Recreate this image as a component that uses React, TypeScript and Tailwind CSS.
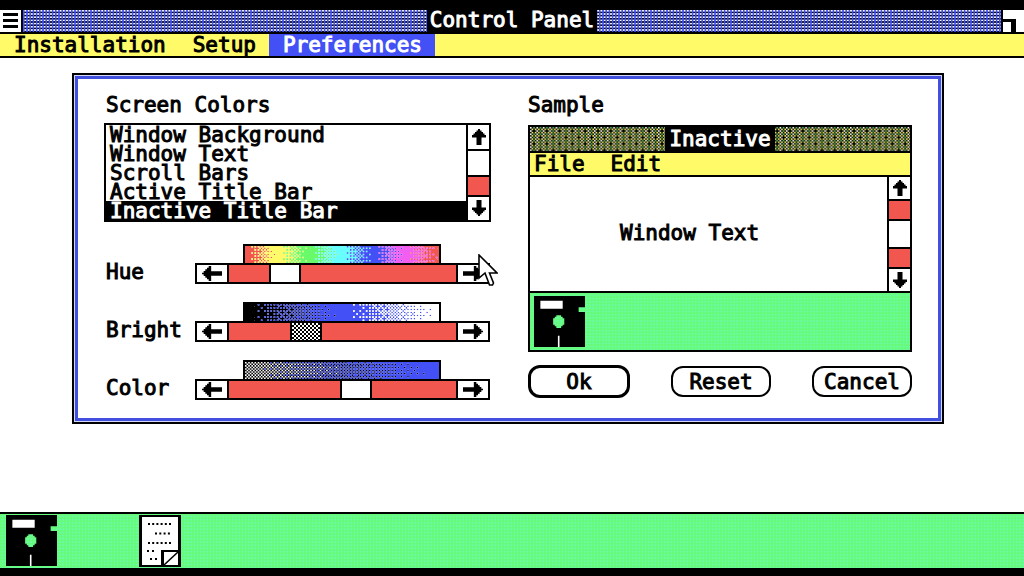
import { useId, useMemo, useState } from "react";
import clsx from "clsx";

type RGB = [number, number, number];
type Cell = { x: number; y: number; color: string };

const PIXEL = 1.6;

const BAYER = [
  [0, 32, 8, 40, 2, 34, 10, 42],
  [48, 16, 56, 24, 50, 18, 58, 26],
  [12, 44, 4, 36, 14, 46, 6, 38],
  [60, 28, 52, 20, 62, 30, 54, 22],
  [3, 35, 11, 43, 1, 33, 9, 41],
  [51, 19, 59, 27, 49, 17, 57, 25],
  [15, 47, 7, 39, 13, 45, 5, 37],
  [63, 31, 55, 23, 61, 29, 53, 21],
];

const BLACK: RGB = [0, 0, 0];
const WHITE: RGB = [255, 255, 255];
const RED: RGB = [241, 86, 79];
const YELLOW: RGB = [255, 251, 104];
const GREEN: RGB = [104, 250, 104];
const CYAN: RGB = [104, 253, 255];
const BLUE: RGB = [66, 80, 246];
const MAGENTA: RGB = [242, 94, 240];

const toCss = (c: RGB) => `rgb(${c[0]},${c[1]},${c[2]})`;

// "checker" stands for the black and white grey at the start of the Color ramp
const RAMPS: Record<string, (RGB | "checker")[]> = {
  Hue: [RED, YELLOW, GREEN, CYAN, BLUE, MAGENTA, RED],
  Bright: [BLACK, BLUE, WHITE],
  Color: ["checker", BLUE],
};

const SLIDERS = [
  { name: "Hue", value: 40 },
  { name: "Bright", value: 61, dithered: true },
  { name: "Color", value: 111 },
];

const SCREEN_PARTS = [
  "Window Background",
  "Window Text",
  "Scroll Bars",
  "Active Title Bar",
  "Inactive Title Bar",
];

const TITLE_CELLS: Cell[] = [
  { x: 0, y: 0, color: "#4250f6" },
  { x: 1, y: 0, color: "#ffffff" },
  { x: 0, y: 1, color: "#4250f6" },
];

const GREEN_CELLS: Cell[] = [{ x: 1, y: 1, color: "#68fbb0" }];

const INACTIVE_CELLS: Cell[] = [];
for (let y = 0; y < 8; y++) {
  for (let x = 0; x < 8; x++) {
    if ((x + y) % 2) continue;
    if ((x === 2 && y === 2) || (x === 6 && y === 6)) continue;
    const color = y % 2 ? "#fffb68" : x % 4 === 0 ? "#ffffff" : "#58c058";
    INACTIVE_CELLS.push({ x, y, color });
  }
}

function PatternFill({ size, base, cells }: { size: number; base: string; cells: Cell[] }) {
  const id = useId();
  return (
    <svg className="absolute inset-0 size-full" aria-hidden="true">
      <defs>
        <pattern
          id={id}
          width={size}
          height={size}
          patternUnits="userSpaceOnUse"
          patternTransform={`scale(${PIXEL})`}
        >
          <rect width={size} height={size} fill={base} />
          {cells.map((c) => (
            <rect key={`${c.x}-${c.y}`} x={c.x} y={c.y} width="1" height="1" fill={c.color} />
          ))}
        </pattern>
      </defs>
      <rect width="100%" height="100%" fill={`url(#${id})`} />
    </svg>
  );
}

function Ramp({ stops }: { stops: (RGB | "checker")[] }) {
  const cols = 122;
  const rows = 11;
  const paths = useMemo(() => {
    const out: Record<string, string> = {};
    for (let y = 0; y < rows; y++) {
      for (let x = 0; x < cols; x++) {
        const pos = (x / (cols - 1)) * (stops.length - 1);
        const i = Math.min(Math.floor(pos), stops.length - 2);
        const pick = pos - i > (BAYER[y % 8][x % 8] + 6) / 72 ? stops[i + 1] : stops[i];
        const color = pick === "checker" ? ((x + y) % 2 ? BLACK : WHITE) : pick;
        const key = toCss(color);
        out[key] = (out[key] || "") + `M${x} ${y}h1v1h-1z`;
      }
    }
    return out;
  }, [stops]);

  return (
    <svg
      className="block size-full"
      viewBox={`0 0 ${cols} ${rows}`}
      preserveAspectRatio="none"
      aria-hidden="true"
    >
      {Object.entries(paths).map(([color, d]) => (
        <path key={color} d={d} fill={color} />
      ))}
    </svg>
  );
}

function SideArrow({ flip }: { flip?: boolean }) {
  return (
    <svg viewBox="0 0 12 9" className={clsx("h-[15px] w-5", flip && "-scale-x-100")} aria-hidden="true">
      <path d="M0 4h1V3h1V2h1V1h1V0h1.500v3.200H12v2.600H5.500V9H4V8H3V7H2V6H1V5H0z" />
    </svg>
  );
}

function UpArrow({ flip }: { flip?: boolean }) {
  return (
    <svg viewBox="0 0 16 16" className={clsx("size-4", flip && "-scale-y-100")} aria-hidden="true">
      <path d="M7 0h2v1.500h1.500V3H12v1.500h1.500V6H15v2.500h-4.500V16h-5V8.500H1V6h1.500V4.500H4V3h1.500V1.500H7z" />
    </svg>
  );
}

function DiskIcon() {
  return (
    <svg viewBox="0 0 32 32" className="size-[51px]" aria-hidden="true">
      <path
        fillRule="evenodd"
        d="M0 0h32v7h-4v3h4v22H0zM14 12h3v1h1v1h1v4h-1v1h-1v1h-3v-1h-1v-1h-1v-4h1v-1h1z"
      />
      <path fill="#fff" d="M4 3h14v5H4zM15 25h1v7h-1z" />
    </svg>
  );
}

function NoteIcon() {
  return (
    <svg viewBox="0 0 42 52" className="h-[52px] w-[42px]" aria-hidden="true">
      <path d="M0 0h42v52H0z" />
      <path fill="#fff" d="M3 2h36v48H3z" />
      <g stroke="#000" strokeWidth="1.8" fill="none">
        <path d="M9 9h24" strokeDasharray="2 2.200" />
        <path d="M16 18.500h15" strokeDasharray="2 2.300" />
        <path d="M9 28h23" strokeDasharray="2 2.200" />
        <path d="M8 36h2M13 36h2M11 44h2M16 44h2" />
      </g>
      <path d="M22 35h18v16H22z" />
      <path fill="#fff" d="M25 37h14v13H25z" />
      <path d="M25 50L39 37" stroke="#000" strokeWidth="1.600" />
    </svg>
  );
}

function Pointer() {
  return (
    <svg viewBox="0 0 20 33" className="pointer-events-none absolute top-2.5 -right-2 h-[33px] w-5" aria-hidden="true">
      <path
        d="M1 1v23l6-5 4.500 12h3l1-2-4-10h7.500z"
        fill="#fff"
        stroke="#000"
        strokeWidth="1.600"
      />
    </svg>
  );
}

function ScrollBar({ label, children }: { label: string; children: React.ReactNode }) {
  return (
    <div className="flex w-[23px] shrink-0 flex-col border-l-2 border-black bg-white">
      <button type="button" aria-label={`${label} up`} className="flex flex-1 items-center justify-center">
        <UpArrow />
      </button>
      {children}
      <button type="button" aria-label={`${label} down`} className="flex flex-1 items-center justify-center">
        <UpArrow flip />
      </button>
    </div>
  );
}

function ColorSlider({ name, initial, dithered }: { name: string; initial: number; dithered?: boolean }) {
  const [value, setValue] = useState(initial);
  const id = useId();
  const step = (by: number) => setValue((v) => Math.max(0, Math.min(195, v + by)));

  return (
    <div className="flex items-end">
      <label htmlFor={id} className="w-[91px] shrink-0 pl-0.5 leading-6">
        {name}
      </label>
      <div className="relative min-w-0 flex-1">
        <div className="mr-[49px] ml-12 h-[19px] border-2 border-b-0 border-black">
          <Ramp stops={RAMPS[name]} />
        </div>
        <div className="flex h-[21px] border-2 border-black">
          <button
            type="button"
            aria-label={`${name} less`}
            onClick={() => step(-5)}
            className="flex w-8 shrink-0 items-center justify-center border-r-2 border-black bg-white"
          >
            <SideArrow />
          </button>
          <input
            id={id}
            type="range"
            min={0}
            max={195}
            value={value}
            onChange={(e) => setValue(Number(e.target.value))}
            className={clsx(
              "h-full min-w-0 flex-1 appearance-none bg-[#f1564f]",
              "[&::-webkit-slider-thumb]:h-[17px] [&::-webkit-slider-thumb]:w-8 [&::-webkit-slider-thumb]:appearance-none [&::-webkit-slider-thumb]:border-x-2 [&::-webkit-slider-thumb]:border-black [&::-webkit-slider-thumb]:bg-white",
              dithered &&
                "[&::-webkit-slider-thumb]:bg-[image:repeating-conic-gradient(#000_0_25%,#fff_0_50%)] [&::-webkit-slider-thumb]:bg-[length:4px_4px]",
            )}
          />
          <button
            type="button"
            aria-label={`${name} more`}
            onClick={() => step(5)}
            className="flex w-8 shrink-0 items-center justify-center border-l-2 border-black bg-white"
          >
            <SideArrow flip />
          </button>
        </div>
        {name === "Hue" && <Pointer />}
      </div>
    </div>
  );
}

function SampleWindow() {
  return (
    <div className="mt-2.5 border-2 border-black bg-white">
      <div className="relative flex h-[26px] justify-center border-b-2 border-black">
        <PatternFill size={8} base="#000" cells={INACTIVE_CELLS} />
        <span className="relative bg-black px-1 leading-6 text-white">Inactive</span>
      </div>
      <div className="flex h-6 gap-[26px] border-b-2 border-black bg-[#fffb68] pl-1 leading-[22px]">
        <button type="button">File</button>
        <button type="button">Edit</button>
      </div>
      <div className="flex h-[116px] border-b-2 border-black">
        <p className="flex flex-1 items-center pl-[90px]">Window Text</p>
        <ScrollBar label="Sample scroll">
          <div className="h-5 border-t-2 border-black bg-[#f1564f]" />
          <div className="h-[30px] border-y-2 border-black" />
          <div className="h-5 border-b-2 border-black bg-[#f1564f]" />
        </ScrollBar>
      </div>
      <div className="relative h-[57px] px-1 py-[3px]">
        <PatternFill size={2} base="#68fa7a" cells={GREEN_CELLS} />
        <div className="relative">
          <DiskIcon />
        </div>
      </div>
    </div>
  );
}

export default function App() {
  const [part, setPart] = useState("Inactive Title Bar");

  return (
    <div className="flex min-h-screen flex-col bg-white font-['DejaVu_Sans_Mono',monospace] text-[21px] text-black [-webkit-text-stroke:1px]">
      <header>
        <div className="flex h-[34px] border-t-10 border-b-2 border-black">
          <button type="button" aria-label="System menu" className="w-[23px] shrink-0 border-r-2 border-black bg-white">
            <svg viewBox="0 0 21 22" className="h-[22px] w-[21px]" aria-hidden="true">
              <path d="M3 3h15v3H3zM3 9h15v3H3zM3 15h15v3H3z" />
            </svg>
          </button>
          <div className="relative flex flex-1 justify-center">
            <PatternFill size={2} base="#000" cells={TITLE_CELLS} />
            <h1 className="relative bg-black px-[3px] leading-5 text-white">Control Panel</h1>
          </div>
          <button type="button" aria-label="Resize" className="w-[23px] shrink-0 border-l-2 border-black bg-white">
            <svg viewBox="0 0 21 22" className="h-[22px] w-[21px]" aria-hidden="true">
              <path d="M0 9h13v13H8V12H0z" />
            </svg>
          </button>
        </div>
        <nav className="flex h-6 border-b-2 border-black bg-[#fffb68] leading-[22px]">
          <button type="button" className="pr-[13px] pl-3.5">Installation</button>
          <button type="button" className="pr-[13px] pl-3.5">Setup</button>
          <button type="button" className="bg-[#4250f6] pr-[13px] pl-3.5 text-white">Preferences</button>
        </nav>
      </header>

      <main className="flex-1 pt-[15px] pr-20 pb-8 pl-[72px]">
        <form className="border-2 border-black bg-[#d4d8f4] p-px" onSubmit={(e) => e.preventDefault()}>
          <div className="grid grid-cols-[387fr_384fr] gap-[37px] border-3 border-[#4250e0] bg-white px-[26px] pt-4 pb-[18px]">
            <section>
              <h2 id="screen-colors" className="pl-0.5 leading-5">Screen Colors</h2>
              <div className="mt-2 flex border-2 border-black">
                <div role="listbox" aria-labelledby="screen-colors" className="flex flex-1 flex-col overflow-hidden">
                  {SCREEN_PARTS.map((name) => (
                    <button
                      key={name}
                      type="button"
                      role="option"
                      aria-selected={part === name}
                      onClick={() => setPart(name)}
                      className={clsx(
                        "h-[19px] pl-1 text-left leading-4",
                        part === name && "bg-black text-white",
                      )}
                    >
                      {name}
                    </button>
                  ))}
                </div>
                <ScrollBar label="List scroll">
                  <div className="h-7 border-y-2 border-black" />
                  <div className="h-5 border-b-2 border-black bg-[#f1564f]" />
                </ScrollBar>
              </div>
              <div className="mt-[22px] mr-px flex flex-col gap-[18px]">
                {SLIDERS.map((s) => (
                  <ColorSlider key={s.name} name={s.name} initial={s.value} dithered={s.dithered} />
                ))}
              </div>
            </section>

            <section>
              <h2 className="leading-5">Sample</h2>
              <SampleWindow />
              <div className="mt-[13px] flex items-center justify-between">
                <button type="submit" className="h-[33px] w-[102px] rounded-xl border-3 border-black leading-5">
                  Ok
                </button>
                <button type="reset" className="h-[31px] w-[100px] rounded-xl border-2 border-black leading-5">
                  Reset
                </button>
                <button type="button" className="h-[31px] w-[100px] rounded-xl border-2 border-black leading-5">
                  Cancel
                </button>
              </div>
            </section>
          </div>
        </form>
      </main>

      <footer className="relative flex h-16 gap-[82px] border-t-2 border-b-8 border-black px-1.5 pt-px">
        <PatternFill size={2} base="#68fa7a" cells={GREEN_CELLS} />
        <button type="button" aria-label="Disk" className="relative self-start">
          <DiskIcon />
        </button>
        <button type="button" aria-label="Notes" className="relative self-start">
          <NoteIcon />
        </button>
      </footer>
    </div>
  );
}
